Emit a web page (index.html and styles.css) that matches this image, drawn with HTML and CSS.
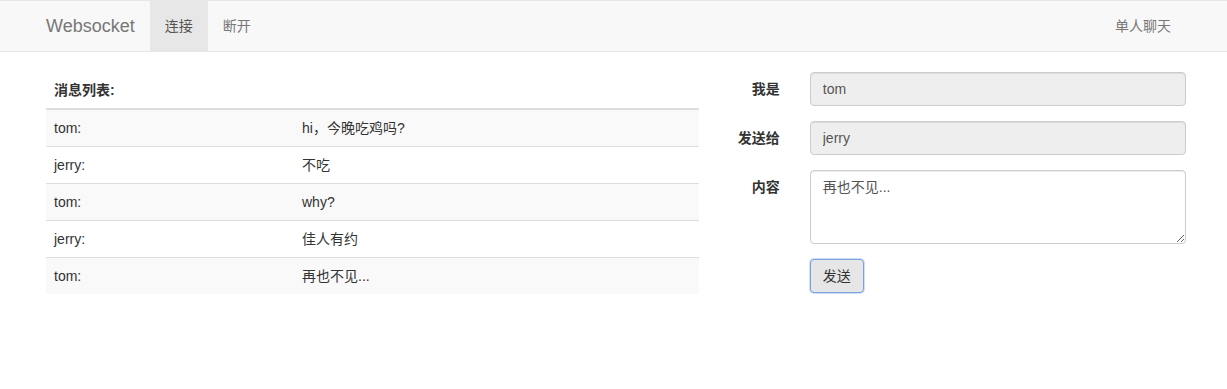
FILE: index.html
```html
<!DOCTYPE html>
<html lang="zh">
<head>
    <meta charset="UTF-8">
    <title>Websocket</title>
    <link rel="stylesheet" href="styles.css">
</head>
<body>
    <nav class="navbar">
        <div class="container nav-inner">
            <a class="brand" href="#">Websocket</a>
            <ul class="nav">
                <li class="active"><a href="#">连接</a></li>
                <li><a href="#">断开</a></li>
            </ul>
            <ul class="nav nav-right">
                <li><a href="#">单人聊天</a></li>
            </ul>
        </div>
    </nav>

    <div class="container">
        <div class="row">
            <div class="col-7">
                <table class="table">
                    <thead>
                        <tr>
                            <th class="who">消息列表:</th>
                            <th></th>
                        </tr>
                    </thead>
                    <tbody>
                        <tr><td>tom:</td><td>hi，今晚吃鸡吗?</td></tr>
                        <tr><td>jerry:</td><td>不吃</td></tr>
                        <tr><td>tom:</td><td>why?</td></tr>
                        <tr><td>jerry:</td><td>佳人有约</td></tr>
                        <tr><td>tom:</td><td>再也不见...</td></tr>
                    </tbody>
                </table>
            </div>
            <div class="col-5">
                <form class="form">
                    <div class="form-group">
                        <label class="form-label">我是</label>
                        <div class="form-field">
                            <input class="form-control" type="text" value="tom" readonly>
                        </div>
                    </div>
                    <div class="form-group">
                        <label class="form-label">发送给</label>
                        <div class="form-field">
                            <input class="form-control" type="text" value="jerry" readonly>
                        </div>
                    </div>
                    <div class="form-group">
                        <label class="form-label">内容</label>
                        <div class="form-field">
                            <textarea class="form-control" rows="3">再也不见...</textarea>
                        </div>
                    </div>
                    <div class="form-group">
                        <div class="form-label"></div>
                        <div class="form-field">
                            <button class="btn" type="button">发送</button>
                        </div>
                    </div>
                </form>
            </div>
        </div>
    </div>
</body>
</html>
```

FILE: styles.css
```css
* {
    box-sizing: border-box;
}
body {
    font-family: "Liberation Sans", Arial, "Noto Sans CJK SC", sans-serif;
    font-size: 14px;
    line-height: 20px;
    color: #333;
    background: #fff;
    margin: 0;
    padding: 0;
}
a {
    text-decoration: none;
}
.container {
    width: 1170px;
    margin-left: 31px;
    padding: 0 15px;
}
.navbar {
    background: #f8f8f8;
    border-top: 1px solid #e7e7e7;
    border-bottom: 1px solid #e7e7e7;
    margin-bottom: 20px;
}
.nav-inner {
    display: flex;
    height: 50px;
}
.brand {
    display: block;
    margin-left: -15px;
    padding: 15px;
    height: 50px;
    font-size: 18px;
    line-height: 20px;
    color: #777;
}
.nav {
    display: flex;
    list-style: none;
    margin: 0;
    padding: 0;
}
.nav a {
    display: block;
    padding: 15px;
    line-height: 20px;
    color: #777;
}
.nav .active a {
    background: #e7e7e7;
    color: #555;
}
.nav-right {
    margin-left: auto;
}
.row {
    display: flex;
    margin: 0 -15px;
}
.col-7 {
    width: 682.5px;
    padding: 0 15px;
}
.col-5 {
    width: 487.5px;
    padding: 0 15px;
}
.table {
    width: 100%;
    border-collapse: collapse;
    border-spacing: 0;
}
.table th, .table td {
    padding: 8px;
    line-height: 20px;
    text-align: left;
    vertical-align: top;
}
.table th {
    font-weight: bold;
    border-bottom: 2px solid #ddd;
}
.table .who {
    width: 248px;
}
.table td {
    border-top: 1px solid #ddd;
}
.table tbody tr:nth-child(odd) {
    background: #f9f9f9;
}
.form-group {
    display: flex;
    margin: 0 -15px 15px;
}
.form-label {
    width: 81.25px;
    flex: none;
    padding: 7px 15px 0;
    text-align: right;
    font-weight: bold;
}
.form-field {
    flex: 1;
    padding: 0 15px;
}
.form-control {
    display: block;
    width: 100%;
    height: 34px;
    padding: 6px 12px;
    font: inherit;
    color: #555;
    background: #fff;
    border: 1px solid #ccc;
    border-radius: 4px;
    box-shadow: inset 0 1px 1px rgba(0, 0, 0, 0.075);
}
.form-control[readonly] {
    background: #eee;
}
textarea.form-control {
    height: 74px;
    resize: vertical;
}
.btn {
    font: inherit;
    color: #333;
    height: 34px;
    padding: 6px 12px;
    background: #e6e6e6;
    border: 1px solid #7ba2e0;
    border-radius: 4px;
    box-shadow: 0 0 0 1px rgba(120, 160, 230, 0.35);
}
```
